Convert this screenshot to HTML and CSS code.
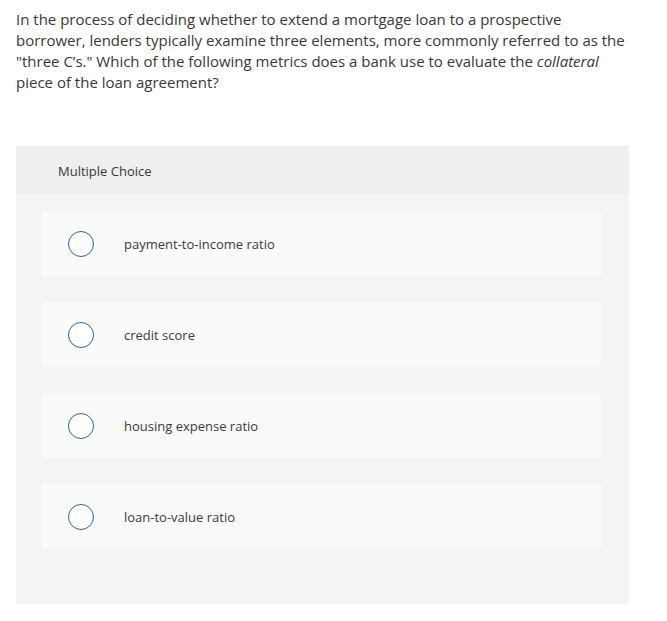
FILE: index.html
```html
<!DOCTYPE html>
<html>
<head>
<meta charset="utf-8">
<link rel="stylesheet" href="styles.css">
</head>
<body>
<div class="page">
  <p class="question">In the process of deciding whether to extend a mortgage loan to a prospective borrower, lenders typically examine three elements, more commonly referred to as the "three C’s." Which of the following metrics does a bank use to evaluate the <em>collateral</em> piece of the loan agreement?</p>
  <div class="panel">
    <div class="panel-header">Multiple Choice</div>
    <div class="panel-body">
      <div class="option"><span class="radio"></span><span class="label">payment-to-income ratio</span></div>
      <div class="option"><span class="radio"></span><span class="label">credit score</span></div>
      <div class="option"><span class="radio"></span><span class="label">housing expense ratio</span></div>
      <div class="option"><span class="radio"></span><span class="label">loan-to-value ratio</span></div>
    </div>
  </div>
</div>
</body>
</html>
```
FILE: styles.css
```css
html, body {
  margin: 0;
  padding: 0;
  background: #ffffff;
}
body {
  font-family: "Open Sans", Lato, sans-serif;
  color: #333333;
}
.page {
  padding: 9px 38px 0 16px;
}
.question {
  margin: 0;
  width: 612px;
  font-size: 15px;
  font-weight: 400;
  line-height: 21px;
  color: #383838;
}
.question em {
  font-style: italic;
}
.panel {
  margin-top: 53px;
  width: 613px;
  background: #f4f4f4;
  border-radius: 2px;
}
.panel-header {
  height: 48px;
  box-sizing: border-box;
  padding: 16px 0 0 42px;
  font-size: 13px;
  font-weight: 400;
  line-height: 18px;
  color: #383838;
  background: #efefef;
}
.panel-body {
  padding: 17px 28px 55px 26px;
  display: flex;
  flex-direction: column;
  gap: 26px;
}
.option {
  height: 65px;
  background: #fafafa;
  border-radius: 3px;
  display: flex;
  align-items: center;
  padding-left: 26px;
}
.radio {
  width: 24px;
  height: 24px;
  border: 1.5px solid #2a679f;
  border-radius: 50%;
  background: #ffffff;
  flex: none;
}
.label {
  margin-left: 30px;
  font-size: 13px;
  font-weight: 400;
  color: #3a3a3a;
}
```
